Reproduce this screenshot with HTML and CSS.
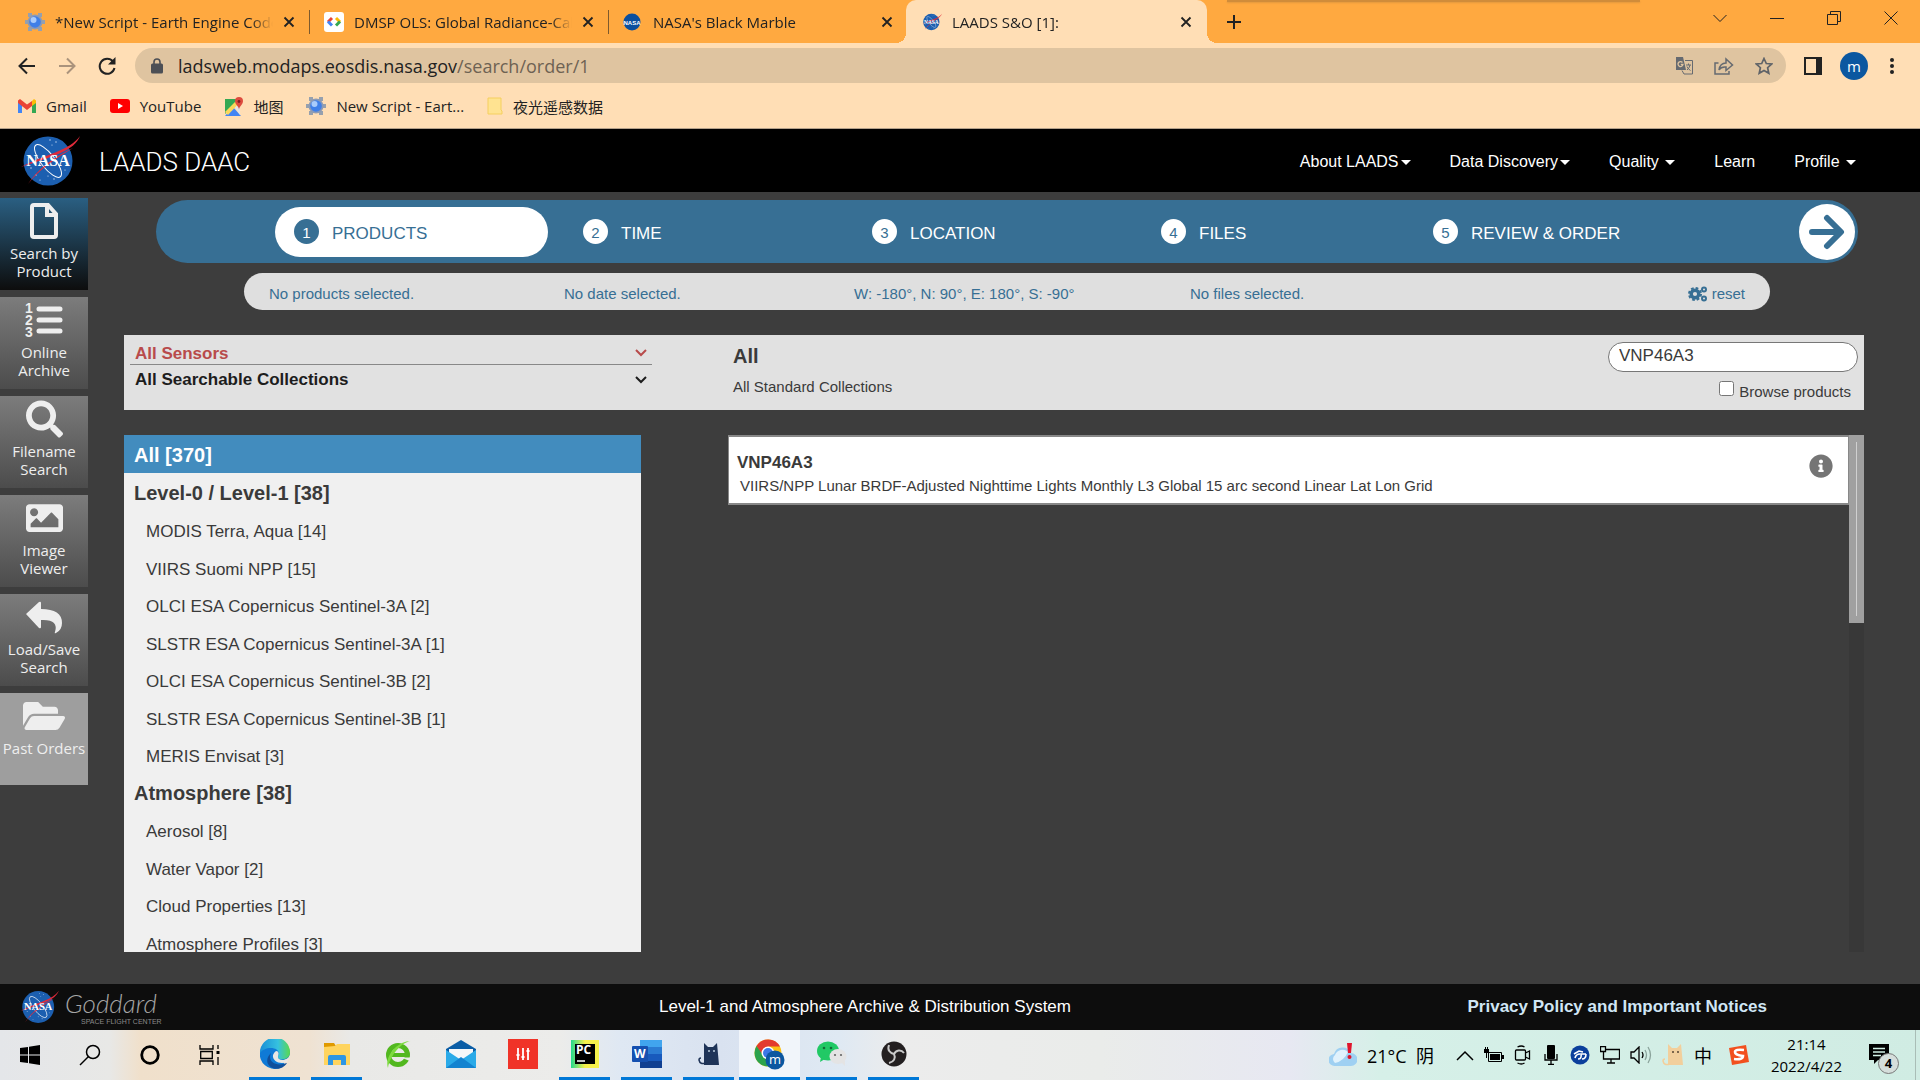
FILE: index.html
```html
<!DOCTYPE html>
<html lang="en">
<head>
    <meta charset="UTF-8">
    <meta name="viewport" content="width=device-width, initial-scale=1.0">
    <title>LAADS S&amp;O [1]:</title>
    <link rel="stylesheet" href="styles.css">
</head>
<body>
    <!-- shared icons -->
    <svg class="defs" aria-hidden="true">
        <symbol id="nasa" viewBox="0 0 60 54">
            <circle cx="28" cy="27" r="24.5" fill="#1c5fb0"/>
            <g fill="#cfe0f5"><circle cx="30" cy="6" r=".7"/><circle cx="36" cy="8" r=".7"/><circle cx="32" cy="11" r=".6"/><circle cx="11" cy="34" r=".7"/><circle cx="16" cy="41" r=".7"/><circle cx="20" cy="46" r=".6"/><circle cx="34" cy="45" r=".7"/><circle cx="28" cy="42" r=".6"/><circle cx="45" cy="36" r=".6"/></g>
            <ellipse cx="28" cy="27" rx="7" ry="20" transform="rotate(-38 28 27)" fill="none" stroke="#fff" stroke-width="1"/>
            <path d="M60 2C54 17 34 22 1 33C28 19 49 17 60 2zM8 50C18 35 32 24 53 14C32 27 18 37 8 50z" fill="#e02a3a"/>
            <text x="28" y="32" text-anchor="middle" class="nasa-word">NASA</text>
        </symbol>
        <symbol id="gear" viewBox="0 0 20 20">
            <path d="M3 1h4v4H3zM13 1h4v4h-4zM3 15h4v4H3zM13 15h4v4h-4zM0 8h20v4H0z" fill="#96a0ae"/>
            <circle cx="10" cy="10" r="7.5" fill="#8d9bb5"/>
            <circle cx="10" cy="10" r="5.8" fill="#3f7fe8"/>
            <circle cx="8.500" cy="8" r="3" fill="#a9cbfb"/>
        </symbol>
        <symbol id="close" viewBox="0 0 12 12"><path d="M1.500 1.500l9 9M10.500 1.500l-9 9" stroke="#222" stroke-width="1.800"/></symbol>
        <symbol id="chev" viewBox="0 0 14 10"><path d="M2 2l5 5 5-5" fill="none" stroke="currentColor" stroke-width="2"/></symbol>
    </svg>

    <div class="browser">
        <div class="tabs">
            <div class="tab">
                <svg class="favicon"><use href="#gear"/></svg>
                <span class="tab-title">*New Script - Earth Engine Code Editor</span>
                <button class="tab-close" aria-label="Close tab"><svg><use href="#close"/></svg></button>
            </div>
            <div class="tab">
                <svg class="favicon" viewBox="0 0 20 20"><rect width="20" height="20" rx="3" fill="#fff"/><path d="M8 6l-4 4" stroke="#ea4335" stroke-width="3"/><path d="M4 9.500l4 4" stroke="#4285f4" stroke-width="3"/><path d="M12 6l4 4" stroke="#fbbc05" stroke-width="3"/><path d="M16 9.500l-4 4" stroke="#34a853" stroke-width="3"/></svg>
                <span class="tab-title">DMSP OLS: Global Radiance-Calibrated</span>
                <button class="tab-close" aria-label="Close tab"><svg><use href="#close"/></svg></button>
            </div>
            <div class="tab">
                <svg class="favicon" viewBox="0 0 20 20"><circle cx="9" cy="10" r="8.500" fill="#0b4f9e"/><text x="9" y="13" text-anchor="middle" class="marble-word">NASA</text></svg>
                <span class="tab-title">NASA's Black Marble</span>
                <button class="tab-close" aria-label="Close tab"><svg><use href="#close"/></svg></button>
            </div>
            <div class="tab active">
                <svg class="favicon"><use href="#nasa"/></svg>
                <span class="tab-title">LAADS S&amp;O [1]:</span>
                <button class="tab-close" aria-label="Close tab"><svg><use href="#close"/></svg></button>
            </div>
            <button class="new-tab" aria-label="New tab"><svg width="16" height="16" viewBox="0 0 16 16"><path d="M8 1v14M1 8h14" stroke="#222" stroke-width="2"/></svg></button>
            <div class="window-controls">
                <button aria-label="Search tabs"><svg width="14" height="14" viewBox="0 0 14 14"><path d="M.500 4L7 10.500 13.500 4"/></svg></button>
                <button aria-label="Minimize"><svg width="14" height="14" viewBox="0 0 14 14"><path d="M0 7.500h14"/></svg></button>
                <button aria-label="Restore"><svg width="14" height="14" viewBox="0 0 14 14"><path d="M.500 3.500h10v10h-10zM3.500 3V.500h10v10H11"/></svg></button>
                <button aria-label="Close"><svg width="14" height="14" viewBox="0 0 14 14"><path d="M.500.500l13 13M13.500.500l-13 13"/></svg></button>
            </div>
        </div>

        <div class="toolbar">
            <button aria-label="Back"><svg width="20" height="20" viewBox="0 0 20 20"><path d="M18 10H3M10 2.500L2.500 10l7.500 7.500" fill="none" stroke="#222"/></svg></button>
            <button aria-label="Forward"><svg width="20" height="20" viewBox="0 0 20 20"><path d="M2 10h15M10 2.500l7.500 7.500-7.500 7.500" fill="none" stroke="#aa937c"/></svg></button>
            <button aria-label="Reload"><svg width="20" height="20" viewBox="0 0 20 20"><path d="M16 5.500A7.500 7.500 0 1 0 17.500 12" fill="none" stroke="#222"/><path d="M18.500 1v7.500H11z" fill="#222"/></svg></button>
            <div class="address">
                <svg width="12" height="16" viewBox="0 0 12 16"><rect x="0" y="5.500" width="12" height="10" rx="1.500" fill="#4c4f55"/><path d="M3 6V4a3 3 0 0 1 6 0v2" fill="none" stroke="#4c4f55" stroke-width="1.600"/></svg>
                <span class="url">ladsweb.modaps.eosdis.nasa.gov<span>/search/order/1</span></span>
                <svg width="18" height="18" viewBox="0 0 18 18"><path d="M1 0h7l3 13H1z" fill="#666a70"/><path d="M10 3.500h7.500v13.500H9l-2-3.500" fill="none" stroke="#666a70"/><path d="M11 8h5M13.500 6.500V8M15 8q-.500 3-3 5M12 9.500q1 2.500 3.500 4" fill="none" stroke="#666a70"/><path d="M7.500 5.500A2.500 2.500 0 1 0 8 7.500H5.800" fill="none" stroke="#dfc4a0" stroke-width="1.300"/></svg>
                <svg width="20" height="18" viewBox="0 0 20 18"><path d="M4.500 6H1v11h14v-3M5 13q1-7 7-7V2l6.500 6-6.500 5.500V10q-5-.500-7 3z" fill="none" stroke="#666a70" stroke-width="1.500"/></svg>
                <svg width="18" height="18" viewBox="0 0 18 18"><path d="M9 1.500l2.300 5 5.400.5-4.100 3.700 1.200 5.500L9 13.400l-4.800 2.800 1.200-5.500L1.300 7l5.400-.5z" fill="none" stroke="#5f6368" stroke-width="1.700"/></svg>
            </div>
            <button aria-label="Side panel"><svg width="18" height="18" viewBox="0 0 18 18"><rect x="1" y="1" width="16" height="16" fill="none" stroke="#222"/><path d="M12 1h5v16h-5z" fill="#222"/></svg></button>
            <button class="avatar">m</button>
            <button class="dots" aria-label="Menu"><svg width="6" height="18" viewBox="0 0 6 18"><g fill="#222"><circle cx="3" cy="3" r="2"/><circle cx="3" cy="9" r="2"/><circle cx="3" cy="15" r="2"/></g></svg></button>
        </div>

        <div class="bookmarks">
            <a href="#"><svg width="18" height="14" viewBox="0 0 18 14"><path d="M0 2v12h4V5z" fill="#4285f4"/><path d="M18 2v12h-4V5z" fill="#34a853"/><path d="M0 1.500L2 0l7 5.500L14 2v5l-5 4-9-7z" fill="#ea4335"/><path d="M14 2l2-2 2 1.500V4l-4 3z" fill="#fbbc04"/></svg>Gmail</a>
            <a href="#"><svg width="20" height="14" viewBox="0 0 20 14"><rect width="20" height="14" rx="3" fill="#f00"/><path d="M8 4l5 3-5 3z" fill="#fff"/></svg>YouTube</a>
            <a href="#"><svg width="19" height="19" viewBox="0 0 19 19"><path d="M1 2h14L1 17z" fill="#34a853"/><path d="M1 19L9 10l8 9z" fill="#4285f4"/><path d="M10 9l6-1v10z" fill="#e6e6e6"/><path d="M1 15L14 2l2 3L4 18z" fill="#fbd75b"/><path d="M15 13c0-4-4-5-4-9a4 4 0 0 1 8 0c0 4-4 5-4 9z" fill="#dd4b3e"/><circle cx="15" cy="4.500" r="1.400" fill="#7f1d1d"/></svg>地图</a>
            <a href="#"><svg width="20" height="20"><use href="#gear"/></svg>New Script - Eart...</a>
            <a href="#"><svg width="16" height="18" viewBox="0 0 16 18"><path d="M1 1h13v12l1 1v3H1z" fill="#ffe391" stroke="#f5cf5e"/></svg>夜光遥感数据</a>
        </div>
    </div>

    <header class="site-header">
        <svg class="site-logo"><use href="#nasa"/></svg>
        <h1>LAADS DAAC</h1>
        <nav>
            <a href="#">About LAADS<i class="caret"></i></a>
            <a href="#">Data Discovery<i class="caret"></i></a>
            <a href="#">Quality <i class="caret"></i></a>
            <a href="#">Learn</a>
            <a href="#">Profile <i class="caret"></i></a>
        </nav>
    </header>

    <main>
        <aside class="sidebar">
            <a href="#" class="current"><svg viewBox="0 0 28 36" width="28" height="36"><path d="M4 2h14l8 9v21q0 2-2 2H4q-2 0-2-2V4q0-2 2-2zM17 2v10h9" fill="none" stroke="#eee" stroke-width="4"/></svg>Search by Product</a>
            <a href="#"><svg viewBox="0 0 38 34" width="38" height="34"><path d="M14 6h21M14 17h21M14 28h21" stroke="#eee" stroke-width="5" stroke-linecap="round"/><g class="digits"><text x="0" y="10">1</text><text x="0" y="22">2</text><text x="0" y="34">3</text></g></svg>Online Archive</a>
            <a href="#"><svg viewBox="0 0 512 512" width="37" height="37"><path fill="#eee" d="M505 442.700L405.300 343c-4.500-4.500-10.600-7-17-7H372c27.600-35.300 44-79.700 44-128C416 93.100 322.900 0 208 0S0 93.100 0 208s93.100 208 208 208c48.300 0 92.700-16.400 128-44v16.300c0 6.400 2.500 12.500 7 17l99.700 99.700c9.400 9.400 24.600 9.400 33.900 0l28.300-28.300c9.400-9.400 9.400-24.600.1-34zM208 336c-70.700 0-128-57.200-128-128 0-70.700 57.200-128 128-128 70.700 0 128 57.200 128 128 0 70.700-57.200 128-128 128z"/></svg>Filename Search</a>
            <a href="#"><svg viewBox="0 0 512 512" width="37" height="37"><path fill="#eee" d="M464 448H48c-26.510 0-48-21.490-48-48V112c0-26.510 21.490-48 48-48h416c26.510 0 48 21.490 48 48v288c0 26.510-21.490 48-48 48zM112 120c-30.928 0-56 25.072-56 56s25.072 56 56 56 56-25.072 56-56-25.072-56-56-56zM64 384h384V272l-87.515-87.515c-4.686-4.686-12.284-4.686-16.971 0L208 320l-55.515-55.515c-4.686-4.686-12.284-4.686-16.971 0L64 336v48z"/></svg>Image Viewer</a>
            <a href="#"><svg viewBox="0 0 38 34" width="38" height="34"><path fill="#eee" d="M1 14L14 2q2-1 2 1v6q21 0 21 14 0 7-6 10-2 1-1-1 4-13-14-12v7q0 2-2 1z"/></svg>Load/Save Search</a>
            <a href="#" class="disabled"><svg viewBox="0 0 576 512" width="42" height="37"><path fill="#eee" d="M572.694 292.093L500.270 416.248A63.997 63.997 0 0 1 444.989 448H45.025c-18.523 0-30.064-20.093-20.731-36.093l72.424-124.155A64 64 0 0 1 152 256h399.964c18.523 0 30.064 20.093 20.730 36.093zM152 224h328v-48c0-26.510-21.490-48-48-48H272l-64-64H48C21.490 64 0 85.490 0 112v278.046l69.077-118.418C86.214 242.250 117.989 224 152 224z"/></svg>Past Orders</a>
        </aside>

        <section class="workspace">
            <div class="steps">
                <a href="#" class="step active"><b>1</b><span>PRODUCTS</span></a>
                <a href="#" class="step"><b>2</b><span>TIME</span></a>
                <a href="#" class="step"><b>3</b><span>LOCATION</span></a>
                <a href="#" class="step step-files"><b>4</b><span>FILES</span></a>
                <a href="#" class="step step-review"><b>5</b><span>REVIEW &amp; ORDER</span></a>
                <button class="next" aria-label="Next"><svg width="36" height="36" viewBox="0 0 36 36"><path d="M3 18h28M18 4l14 14-14 14" fill="none" stroke="#376f94" stroke-width="6" stroke-linecap="round" stroke-linejoin="round"/></svg></button>
            </div>

            <div class="summary">
                <span class="sum-products">No products selected.</span>
                <span class="sum-date">No date selected.</span>
                <span class="sum-area">W: -180°, N: 90°, E: 180°, S: -90°</span>
                <span>No files selected.</span>
                <a href="#" class="reset"><svg width="20" height="16" viewBox="0 0 20 16"><g fill="none" stroke="#376f94"><circle cx="7" cy="8" r="3.800" stroke-width="3.400"/><circle cx="7" cy="8" r="6" stroke-width="2" stroke-dasharray="2.700 2"/><circle cx="16" cy="3.500" r="2" stroke-width="2"/><circle cx="16" cy="12.500" r="2" stroke-width="2"/></g></svg>reset</a>
            </div>

            <div class="filters">
                <div class="selects">
                    <div class="select-row sensors">
                        <select aria-label="Sensors"><option>All Sensors</option></select>
                        <svg width="14" height="10"><use href="#chev"/></svg>
                    </div>
                    <div class="select-row">
                        <select aria-label="Collections"><option>All Searchable Collections</option></select>
                        <svg width="14" height="10"><use href="#chev"/></svg>
                    </div>
                </div>
                <div class="heading">
                    <h2>All</h2>
                    <p>All Standard Collections</p>
                </div>
                <div class="search">
                    <input type="text" value="VNP46A3" aria-label="Filter products">
                    <div class="browse"><input type="checkbox" id="browse"><label for="browse">Browse products</label></div>
                </div>
            </div>

            <div class="panels">
                <div class="categories">
                    <h3 class="selected">All [370]</h3>
                    <h3>Level-0 / Level-1 [38]</h3>
                    <ul>
                        <li>MODIS Terra, Aqua [14]</li>
                        <li>VIIRS Suomi NPP [15]</li>
                        <li>OLCI ESA Copernicus Sentinel-3A [2]</li>
                        <li>SLSTR ESA Copernicus Sentinel-3A [1]</li>
                        <li>OLCI ESA Copernicus Sentinel-3B [2]</li>
                        <li>SLSTR ESA Copernicus Sentinel-3B [1]</li>
                        <li>MERIS Envisat [3]</li>
                    </ul>
                    <h3>Atmosphere [38]</h3>
                    <ul>
                        <li>Aerosol [8]</li>
                        <li>Water Vapor [2]</li>
                        <li>Cloud Properties [13]</li>
                        <li>Atmosphere Profiles [3]</li>
                    </ul>
                </div>
                <div class="results">
                    <div class="product">
                        <div>
                            <h4>VNP46A3</h4>
                            <p>VIIRS/NPP Lunar BRDF-Adjusted Nighttime Lights Monthly L3 Global 15 arc second Linear Lat Lon Grid</p>
                        </div>
                        <svg viewBox="0 0 512 512" width="24" height="28"><path fill="#757575" d="M256 8C119.043 8 8 119.083 8 256c0 136.997 111.043 248 248 248s248-111.003 248-248C504 119.083 392.957 8 256 8zm0 110c23.196 0 42 18.804 42 42s-18.804 42-42 42-42-18.804-42-42 18.804-42 42-42zm56 254c0 6.627-5.373 12-12 12h-88c-6.627 0-12-5.373-12-12v-24c0-6.627 5.373-12 12-12h12v-64h-12c-6.627 0-12-5.373-12-12v-24c0-6.627 5.373-12 12-12h64c6.627 0 12 5.373 12 12v100h12c6.627 0 12 5.373 12 12v24z"/></svg>
                    </div>
                    <div class="scrollbar"><div class="thumb"></div></div>
                </div>
            </div>
        </section>
    </main>

    <footer>
        <div class="goddard">
            <svg><use href="#nasa"/></svg>
            <div class="signature">Goddard<small>SPACE FLIGHT CENTER</small></div>
        </div>
        <span class="system">Level-1 and Atmosphere Archive &amp; Distribution System</span>
        <a href="#">Privacy Policy and Important Notices</a>
    </footer>

    <div class="taskbar">
        <button class="sys" aria-label="Start"><svg width="20" height="20" viewBox="0 0 20 20"><path d="M0 3l8-1v7.500H0zM9 1.800L20 0v9.500H9zM0 10.500h8V18l-8-1zM9 10.500h11V20L9 18.200z"/></svg></button>
        <button class="sys" aria-label="Search"><svg width="22" height="22" viewBox="0 0 22 22"><circle cx="14" cy="8" r="6.500" fill="none" stroke="#000" stroke-width="1.500"/><path d="M9.500 12.500L1 21" stroke="#000" stroke-width="1.500"/></svg></button>
        <button class="sys" aria-label="Cortana"><svg width="20" height="20" viewBox="0 0 20 20"><circle cx="10" cy="10" r="8.300" fill="none" stroke="#000" stroke-width="2.800"/></svg></button>
        <button class="sys" aria-label="Task view"><svg width="22" height="20" viewBox="0 0 22 20"><path d="M1 0v4h13V0M1 20v-4h13v4M1.700 6.500h11.600v7H1.700zM19 0v4M19 12v8" fill="none" stroke="#000" stroke-width="1.300"/><path d="M17.500 6h3v3h-3z"/></svg></button>
        <button class="app open" aria-label="Edge"><svg width="30" height="30" viewBox="0 0 30 30"><defs><linearGradient id="edge"><stop offset="0" stop-color="#1b8fd6"/><stop offset=".6" stop-color="#35c1e0"/><stop offset="1" stop-color="#5bd94e"/></linearGradient></defs><path d="M15 0a15 15 0 0 1 15 13c0 6-4 8-8 8l3 5A15 15 0 1 1 15 0z" fill="#0f7ad6"/><path d="M0 14A15 15 0 0 1 30 13c0 6-5 8-10 7-3-1-2-3-1-5 0-4-4-6-8-6-5 0-9 2-11 5z" fill="url(#edge)"/><path d="M11 14c-4 9 5 14 16 10-5 8-16 7-19 1-2-4 0-8 3-11z" fill="#104f9b"/><path d="M17 12c4 3-1 5 2 8 3 2 7 1 10-1l-2 4c-7 3-15-1-14-7 1-2 2-4 4-4z" fill="#e9e7e4"/></svg></button>
        <button class="app open" aria-label="Explorer"><svg width="28" height="24" viewBox="0 0 28 24"><path d="M1 1h10l2 3v4H1z" fill="#e09a00"/><path d="M1 5l11-1 2-2h13v21H1z" fill="#ffd45e"/><path d="M5 23v-8q0-2 2-2h14q2 0 2 2v8h-5v-5h-8v5z" fill="#2e96e4"/></svg></button>
        <button class="app" aria-label="360 Browser"><svg width="28" height="30" viewBox="0 0 28 30"><circle cx="13" cy="16" r="9.500" fill="none" stroke="#52b81f" stroke-width="5"/><path d="M6 16h17" stroke="#52b81f" stroke-width="4"/><path d="M16 18.500h10v4z" fill="#e9ebe9"/><path d="M3 29C-1 18 12 2 26 2c-9 1-21 14-23 27z" fill="#7ddb3e"/></svg></button>
        <button class="app" aria-label="Mail"><svg width="30" height="28" viewBox="0 0 30 28"><path d="M0 9L15 0l15 9v19H0z" fill="#0a5da6"/><path d="M3 9h24v10H3z" fill="#f5f7f9"/><path d="M0 10l15 10 15-10v18H0z" fill="#2aaae8"/><path d="M0 28l15-11 15 11z" fill="#1383d0"/></svg></button>
        <button class="app" aria-label="Mixer"><svg width="30" height="30" viewBox="0 0 30 30"><path d="M0 0h30v30H0z" fill="#f03328"/><path d="M10 9v12M15 9v12M20 9v12" stroke="#fff" stroke-width="1.800"/><path d="M8.500 16h3M13.500 18h3M18.500 12h3" stroke="#fff" stroke-width="2"/></svg></button>
        <button class="app open" aria-label="PyCharm"><svg width="28" height="28" viewBox="0 0 28 28"><defs><linearGradient id="pc"><stop offset="0" stop-color="#23d98d"/><stop offset=".5" stop-color="#f6f04b"/></linearGradient></defs><path d="M0 0h28v28H0z" fill="url(#pc)"/><path d="M4 4h20v20H4z"/><path d="M6 21h8" stroke="#fff" stroke-width="1.500"/><text x="5" y="14" class="pc-word">PC</text></svg></button>
        <button class="app open" aria-label="Word"><svg width="30" height="28" viewBox="0 0 30 28"><path d="M8 0h22v7H8z" fill="#41a5ee"/><path d="M8 7h22v7H8z" fill="#2b7cd3"/><path d="M8 14h22v7H8z" fill="#185abd"/><path d="M8 21h22v7H8z" fill="#103f91"/><rect y="6" width="16" height="16" rx="1" fill="#1550b0"/><text x="2" y="18" class="pc-word">W</text></svg></button>
        <button class="app open" aria-label="Clash"><svg width="22" height="22" viewBox="0 0 22 22"><path d="M6 0l4 4h5l4-4 2 22H6z" fill="#1f3458"/><path d="M8 20q-6 2-7-3 0-2 2-2" fill="none" stroke="#1f3458" stroke-width="1.500"/><circle cx="11" cy="8" r="1" fill="#bcd"/><circle cx="16" cy="8" r="1" fill="#bcd"/></svg></button>
        <button class="app open focused" aria-label="Chrome"><svg width="32" height="32" viewBox="0 0 32 32"><circle cx="14" cy="15" r="13.500" fill="#fbc116"/><path d="M2.500 8A13.500 13.500 0 0 1 26 8.500H14l-6 10z" fill="#e33b2e"/><path d="M2.500 8a13.500 13.500 0 0 0 11 20.500l6-11-11-1z" fill="#2ba24c"/><circle cx="14" cy="15" r="6.500" fill="#fff"/><circle cx="14" cy="15" r="5" fill="#3b78e7"/><circle cx="21" cy="22" r="9.500" fill="#0b57a0"/><text x="21" y="26" text-anchor="middle" class="m-word">m</text></svg></button>
        <button class="app open" aria-label="WeChat"><svg width="30" height="26" viewBox="0 0 30 26"><ellipse cx="11" cy="10" rx="11" ry="9.500" fill="#21c965"/><path d="M4 16l-1 5 5-3z" fill="#21c965"/><circle cx="7" cy="7" r="1.300" fill="#146b38"/><circle cx="14" cy="7" r="1.300" fill="#146b38"/><ellipse cx="21" cy="15.500" rx="8.500" ry="7.500" fill="#e4e4e4"/><path d="M24 21l4 4v-6z" fill="#e4e4e4"/><circle cx="18" cy="14" r="1.100" fill="#666"/><circle cx="24" cy="14" r="1.100" fill="#666"/></svg></button>
        <button class="app open" aria-label="OBS"><svg width="26" height="26" viewBox="0 0 26 26"><circle cx="13" cy="13" r="12.500" fill="#231f20"/><path d="M8 4c-2 5 1 8 5 9M23 12c-3-4-8-3-10 1M8 22c5-1 7-5 5-9" fill="none" stroke="#c9c9c9" stroke-width="2"/></svg></button>

        <div class="tray">
            <svg width="28" height="24" viewBox="0 0 28 24"><path d="M6 23a6 6 0 0 1-1-12 9 9 0 0 1 17-1 6.500 6.500 0 0 1 0 13z" fill="#9fd0f2"/><path d="M6 20a5 5 0 0 1 0-8 8 8 0 0 1 13-3q-4 9-13 11z" fill="#e1f2fc"/><path d="M18 0h5l-1 10h-3z" fill="#e0142c"/><circle cx="20.500" cy="14" r="2" fill="#e0142c"/></svg>
            <span class="weather">21°C&nbsp; 阴</span>
            <svg width="18" height="12" viewBox="0 0 18 12"><path d="M1 11l8-8 8 8" fill="none" stroke="#000" stroke-width="1.500"/></svg>
            <svg width="20" height="16" viewBox="0 0 20 16"><path d="M4.500 5.500h13v9h-13z" fill="none" stroke="#000"/><path d="M6 7h10v6H6zM18 8h2v4h-2zM0 2h5v4H0zM1 0h1v2H1zM3 0h1v2H3zM2 6h1v5H2z"/></svg>
            <svg width="18" height="20" viewBox="0 0 16 20"><path d="M1 5h8q1 0 1 1v8q0 1-1 1H1q-1 0-1-1V6q0-1 1-1M10 8l4-2v8l-4-2M2 2q4-2 7 0M2 18q4 2 7 0" transform="translate(.5)" fill="none" stroke="#000" stroke-width="1.300"/></svg>
            <svg width="18" height="20" viewBox="0 0 14 20"><rect x="3" width="8" height="14" rx="1"/><path d="M1 9v6h12V9M7 15v4M4 19.500h6" fill="none" stroke="#000" stroke-width="1.300"/></svg>
            <svg width="20" height="20" viewBox="0 0 20 20"><circle cx="10" cy="10" r="9.500" fill="#0b3f9c"/><path d="M4 9l5-3 4 1M5 13q1-4 5-4M8 14q4 0 3-5h5M12 14q4 0 4-5" fill="none" stroke="#fff" stroke-width="1.600"/></svg>
            <svg width="20" height="18" viewBox="0 0 20 18"><path d="M5 3.500h14.500v9.500H3.500V6M0.500.500h5v5h-5zM11 13v4M7 17h8" fill="none" stroke="#000" stroke-width="1.300"/></svg>
            <svg width="22" height="18" viewBox="0 0 22 18"><path d="M1 6h3l5-5v16l-5-5H1zM12 6q2 3 0 6" fill="none" stroke="#000" stroke-width="1.300"/><path d="M15 4q3 5 0 10M18 1q5 8 0 16" fill="none" stroke="#8aa39b" stroke-width="1.300"/></svg>
            <svg width="22" height="22" viewBox="0 0 22 22"><path d="M6 0l4 4h5l4-4 2 21H6z" fill="#f2cf9c"/><path d="M8 20q-6 2-7-3 0-2 2-2" fill="none" stroke="#f2cf9c" stroke-width="1.500"/><circle cx="11" cy="8" r="1" fill="#543"/><circle cx="16" cy="8" r="1" fill="#543"/></svg>
            <span class="ime">中</span>
            <svg class="sogou" width="20" height="20" viewBox="0 0 20 20"><path d="M0 3L17 0l3 17-17 3z" fill="#f2501e"/><path d="M15 5q-9-1-9 2t8 4q0 4-9 3" fill="none" stroke="#fff" stroke-width="2.600"/></svg>
            <div class="clock"><span>21:14</span><span>2022/4/22</span></div>
            <div class="notify">
                <svg width="20" height="20" viewBox="0 0 20 20"><path d="M0 0h20v16H9l-4 4v-4H0z"/><path d="M4 4.500h12M4 8h12M4 11.500h8" stroke="#d0eee4" stroke-width="1.300"/></svg>
                <span class="badge">4</span>
            </div>
        </div>
    </div>
</body>
</html>
```
FILE: styles.css
```css
* {
    box-sizing: border-box;
}
body {
    margin: 0;
    height: 100vh;
    display: flex;
    flex-direction: column;
    overflow: hidden;
    background: #3d3d3d;
    color: #3a3a3a;
    font-family: "Liberation Sans", Arial, sans-serif;
    font-size: 15px;
}
h1, h2, h3, h4, p, ul {
    margin: 0;
    padding: 0;
}
a {
    color: inherit;
    text-decoration: none;
}
button {
    border: none;
    background: none;
    padding: 0;
    font: inherit;
    display: flex;
    align-items: center;
    justify-content: center;
}
svg {
    flex: none;
}
.defs {
    position: absolute;
    width: 0;
    height: 0;
}
.nasa-word {
    font: bold 16px "Liberation Serif", serif;
    fill: #fff;
}
.marble-word {
    font: bold 6px "Liberation Sans", sans-serif;
    fill: #fff;
}
.pc-word {
    font: bold 12px "Open Sans", sans-serif;
    fill: #fff;
}
.m-word {
    font: 13px "Open Sans", sans-serif;
    fill: #fff;
}

/* browser window */
.browser {
    flex: none;
    background: #ffdeb5;
    border-bottom: 1px solid #b3a08a;
    color: #222;
    font-family: "Open Sans", "Noto Sans CJK SC", sans-serif;
}
.tabs {
    position: relative;
    display: flex;
    height: 43px;
    padding-left: 11px;
    background: #ffa940;
}
/* edge of a window lying above the strip */
.tabs::after {
    content: "";
    position: absolute;
    top: 0;
    left: 1227px;
    width: 413px;
    height: 2px;
    background: #d08c3a;
    box-shadow: 0 1px 2px #e0983e;
}
.tab {
    display: flex;
    align-items: center;
    width: 299px;
    padding: 0 13px 0 14px;
    background: linear-gradient(#7d5a2d, #7d5a2d) right center / 1px 24px no-repeat;
}
.tab:nth-child(3) {
    background: none;
}
.tab.active {
    position: relative;
    width: 301px;
    margin-left: -2px;
    padding-left: 16px;
    background: #ffdeb5;
    border-radius: 10px 10px 0 0;
}
.tab.active::before, .tab.active::after {
    content: "";
    position: absolute;
    bottom: 0;
    width: 10px;
    height: 10px;
}
.tab.active::before {
    left: -10px;
    background: radial-gradient(circle at 0 0, transparent 10px, #ffdeb5 10px);
}
.tab.active::after {
    right: -10px;
    background: radial-gradient(circle at 100% 0, transparent 10px, #ffdeb5 10px);
}
.favicon {
    width: 20px;
    height: 20px;
    margin-right: 10px;
}
.tab-title {
    flex: 1;
    overflow: hidden;
    white-space: nowrap;
    -webkit-mask-image: linear-gradient(to right, #000 90%, transparent);
    mask-image: linear-gradient(to right, #000 90%, transparent);
}
.tab-close {
    width: 16px;
    margin-left: 8px;
}
.tab-close svg {
    width: 12px;
    height: 12px;
}
.new-tab {
    width: 54px;
}
.window-controls {
    display: flex;
    margin-left: auto;
    margin-right: 1px;
    height: 36px;
}
.window-controls button {
    width: 57px;
}
.window-controls path {
    fill: none;
    stroke: #222;
}
.toolbar {
    display: flex;
    align-items: center;
    height: 45px;
    padding: 0 14px 0 7px;
}
.toolbar button {
    width: 40px;
    height: 40px;
    stroke-width: 2px;
}
.address {
    flex: 1;
    display: flex;
    align-items: center;
    gap: 21px;
    height: 35px;
    margin: 0 7px 0 8px;
    padding: 0 13px 0 16px;
    border-radius: 18px;
    background: #dfc4a0;
}
.url {
    flex: 1;
    margin-left: -6px;
    font-size: 18px;
    line-height: 24px;
}
.url span {
    color: #6e6253;
}
.toolbar .avatar {
    width: 28px;
    height: 28px;
    margin: 0 10px 0 7px;
    border-radius: 50%;
    background: #0b57a0;
    color: #fff;
}
.toolbar .dots {
    width: 28px;
}
.bookmarks {
    display: flex;
    align-items: center;
    gap: 23px;
    height: 40px;
    padding: 0 18px 4px;
}
.bookmarks a {
    display: flex;
    align-items: center;
    gap: 10px;
}

/* site header */
.site-header {
    display: flex;
    flex: none;
    align-items: center;
    height: 63px;
    padding: 0 64px 0 20px;
    background: #000;
    color: #fff;
}
.site-logo {
    width: 60px;
    height: 54px;
    margin-right: 19px;
}
.site-header h1 {
    padding-top: 3px;
    font: 300 26px Roboto, sans-serif;
}
nav {
    display: flex;
    gap: 39px;
    margin-left: auto;
    padding-top: 3px;
    font-size: 16px;
    white-space: pre;
}
.caret {
    display: inline-block;
    margin-left: 2px;
    border: 5px solid transparent;
    border-top-color: #fff;
    border-bottom: none;
    vertical-align: middle;
}

/* main area */
main {
    flex: 1;
    display: flex;
    min-height: 0;
}
.sidebar {
    display: flex;
    flex-direction: column;
    gap: 7px;
    width: 88px;
    padding-top: 6px;
    font: 15px/18px "Open Sans", "Noto Sans", sans-serif;
}
.sidebar a {
    height: 92px;
    padding-top: 4px;
    background: linear-gradient(#7c7c7c, #4c4c4c);
    color: #eee;
    text-align: center;
}
.sidebar svg {
    display: block;
    height: 38px;
    margin: 0 auto 4px;
}
.sidebar .current {
    background: linear-gradient(#2a5f82, #0d0d0d);
}
.sidebar .disabled {
    background: #9e9e9e;
}
.digits {
    font: bold 14px "Liberation Sans", sans-serif;
    fill: #eee;
}
.workspace {
    flex: 1;
    display: flex;
    flex-direction: column;
    min-width: 0;
    padding: 8px 56px 32px 36px;
}
.steps {
    display: flex;
    flex: none;
    align-items: center;
    gap: 16px;
    height: 63px;
    margin: 0 6px 0 32px;
    padding: 0 3px 0 119px;
    border-radius: 32px;
    background: #376f94;
    color: #fff;
    font-size: 17px;
}
.step {
    flex: 0 1 273px;
    display: flex;
    align-items: center;
    gap: 13px;
    height: 50px;
    padding-left: 19px;
    border-radius: 25px;
    white-space: nowrap;
}
.step b {
    width: 25px;
    height: 25px;
    border-radius: 50%;
    background: #fff;
    color: #376f94;
    font-size: 15px;
    font-weight: normal;
    line-height: 27px;
    text-align: center;
}
.step span {
    padding-top: 4px;
}
.step.active {
    background: #fff;
    color: #376f94;
}
.step.active b {
    background: #376f94;
    color: #fff;
}
.step-files {
    flex-basis: 256px;
}
.step-review {
    flex: 1;
}
.next {
    width: 56px;
    height: 56px;
    border-radius: 50%;
    background: #fff;
}
.summary {
    display: flex;
    flex: none;
    align-items: center;
    height: 37px;
    margin: 10px 94px 25px 120px;
    padding: 4px 25px 0;
    border-radius: 19px;
    background: #dfdfdf;
    color: #376f94;
}
.sum-products {
    width: 295px;
}
.sum-date {
    width: 290px;
}
.sum-area {
    width: 336px;
}
.reset {
    display: flex;
    align-items: center;
    gap: 4px;
    margin-left: auto;
}
.filters {
    display: flex;
    flex: none;
    height: 75px;
    padding: 5px 6px;
    background: #e1e1e1;
}
.selects {
    width: 522px;
}
.select-row {
    display: flex;
    align-items: center;
    height: 27px;
    padding: 2px 4px 0 5px;
    color: #1d1d1d;
}
.sensors {
    height: 25px;
    border-bottom: 1px solid #888;
    color: #b84b4b;
}
.select-row select {
    flex: 1;
    appearance: none;
    border: none;
    padding: 0;
    background: none;
    color: inherit;
    font: bold 17px "Liberation Sans", Arial, sans-serif;
}
.heading {
    flex: 1;
    padding: 4px 0 0 81px;
}
.heading h2 {
    font-size: 20px;
    line-height: 24px;
}
.heading p {
    margin-top: 8px;
    line-height: 22px;
}
.search {
    width: 250px;
    padding-top: 2px;
}
.search input[type=text] {
    display: block;
    width: 100%;
    height: 30px;
    padding: 0 10px 2px;
    border: 1px solid #777;
    border-radius: 15px;
    color: #3a3a3a;
    font: 17px "Liberation Sans", Arial, sans-serif;
}
.browse {
    display: flex;
    justify-content: flex-end;
    margin-top: 9px;
    padding-right: 7px;
}
.browse input {
    width: 15px;
    height: 15px;
    margin: 0 5px 0 0;
}
.browse label {
    line-height: 22px;
}
.panels {
    flex: 1;
    display: flex;
    gap: 87px;
    min-height: 0;
    margin-top: 25px;
}
.categories {
    width: 517px;
    overflow: hidden;
    background: #f0f0f0;
}
.categories h3 {
    height: 37px;
    padding-left: 10px;
    font-size: 20px;
    line-height: 35px;
}
.categories .selected {
    height: 38px;
    margin-bottom: 3px;
    background: #428cbe;
    color: #fff;
    line-height: 41px;
}
.categories ul {
    list-style: none;
    padding-left: 22px;
    font-size: 17px;
}
.categories li {
    line-height: 37px;
}
.categories li:nth-child(odd) {
    line-height: 38px;
}
.results {
    flex: 1;
    display: flex;
    align-items: flex-start;
}
.product {
    flex: 1;
    display: flex;
    justify-content: space-between;
    height: 70px;
    padding: 15px 15px 0 8px;
    border: 1px solid #888;
    border-width: 2px 1px;
    background: #fff;
}
.product h4 {
    font-size: 17px;
    line-height: 22px;
}
.product p {
    padding-left: 3px;
    line-height: 24px;
}
.scrollbar {
    align-self: stretch;
    width: 15px;
    background: #383838;
}
.thumb {
    height: 188px;
    background: #a0a0a0 linear-gradient(#d0d0d0, #d0d0d0) center / 1px 174px no-repeat;
}

/* footer */
footer {
    display: flex;
    flex: none;
    align-items: center;
    height: 46px;
    padding: 0 153px 0 20px;
    background: #0d0d0d;
    font-size: 17px;
}
.goddard {
    display: flex;
    gap: 6px;
    width: 639px;
}
.goddard svg {
    width: 39px;
    height: 38px;
}
.signature {
    color: #a5a5a5;
    font: italic 300 26px/30px Lato, sans-serif;
}
.signature small {
    display: block;
    padding-left: 16px;
    color: #8a8a8a;
    font: 7px/8px "Liberation Sans", Arial, sans-serif;
}
.system {
    color: #fff;
}
footer a {
    margin-left: auto;
    color: #d0e6f5;
    font-weight: bold;
}

/* taskbar */
.taskbar {
    display: flex;
    flex: none;
    height: 50px;
    background: linear-gradient(to right, #e4e6e9, #e8e8e6 110px, #f0e0cb 140px, #efe2d2 310px, #e9e9e7 350px, #ececea 560px, #dfe8f3 620px, #d9e2f0 720px, #dfe9f3 840px, #ececec 900px, #eaecea 1100px, #e7e8f2 1290px, #d6f0e8 1380px, #d0ece3);
    color: #000;
    font-family: "Open Sans", "Noto Sans CJK SC", sans-serif;
}
.sys {
    width: 60px;
}
.app {
    width: 51px;
    margin: 0 5px 0 6px;
    border-bottom: 3px solid transparent;
}
.sys + .app {
    margin-left: 9px;
}
.open {
    border-color: #0078d7;
}
.focused {
    width: 61px;
    margin: 0;
    background: #f1f5fa;
}
.tray {
    display: flex;
    align-items: center;
    gap: 10px;
    margin-left: auto;
    margin-right: 4px;
    padding-right: 22px;
    border-right: 1px solid #a9bdb6;
}
.weather {
    margin-right: 12px;
    font-size: 18px;
}
.ime {
    font-size: 18px;
}
.sogou {
    margin-left: 7px;
}
.clock {
    display: flex;
    flex-direction: column;
    align-items: center;
    margin: 0 17px 0 12px;
    line-height: 22px;
}
.notify {
    position: relative;
    height: 22px;
    width: 24px;
}
.badge {
    position: absolute;
    left: 9px;
    top: 9px;
    width: 21px;
    height: 21px;
    border: 1px solid #777;
    border-radius: 50%;
    background: #d5dedb;
    font-size: 13px;
    font-weight: bold;
    line-height: 19px;
    text-align: center;
}
```
